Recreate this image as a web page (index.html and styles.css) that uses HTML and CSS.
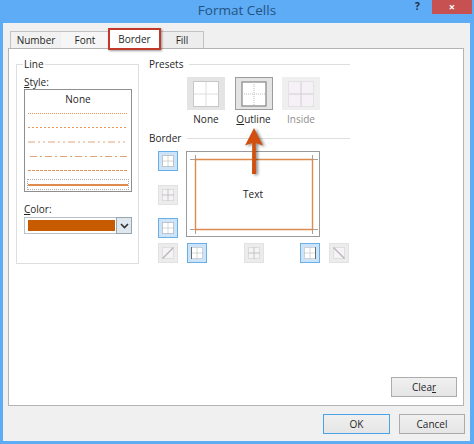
FILE: index.html
```html
<!DOCTYPE html>
<html lang="en">
<head>
    <meta charset="UTF-8">
    <title>Format Cells</title>
    <link rel="stylesheet" href="styles.css">
</head>
<body>

<svg class="defs" width="0" height="0">
    <symbol id="ico-cross" viewBox="0 0 20 20">
        <rect x="4.5" y="4.5" width="11" height="11" fill="#fff" stroke="#9a9a9a" stroke-dasharray="1 1"/>
        <path d="M10 4.5v11M4.5 10h11" stroke="#b0b0b0" stroke-dasharray="1 1" fill="none"/>
    </symbol>
    <symbol id="ico-left" viewBox="0 0 20 20">
        <rect x="4.5" y="4.5" width="11" height="11" fill="#fff" stroke="#b4b4b4" stroke-dasharray="1 1"/>
        <path d="M10 4.5v11M4.5 10h11" stroke="#b0b0b0" stroke-dasharray="1 1" fill="none"/>
        <path d="M4.5 4v12" stroke="#6d6d6d" fill="none"/>
    </symbol>
    <symbol id="ico-right" viewBox="0 0 20 20">
        <rect x="4.5" y="4.5" width="11" height="11" fill="#fff" stroke="#b4b4b4" stroke-dasharray="1 1"/>
        <path d="M10 4.5v11M4.5 10h11" stroke="#b0b0b0" stroke-dasharray="1 1" fill="none"/>
        <path d="M15.5 4v12" stroke="#6d6d6d" fill="none"/>
    </symbol>
    <symbol id="ico-mid" viewBox="0 0 20 20">
        <rect x="4.5" y="4.5" width="11" height="11" fill="#f6f3f6" stroke="#c8c8c8" stroke-dasharray="1 1"/>
        <path d="M10 4v12M4 10h12" stroke="#c4c4c4" fill="none"/>
    </symbol>
    <symbol id="ico-up" viewBox="0 0 20 20">
        <rect x="4.5" y="4.5" width="11" height="11" fill="#f6f3f6" stroke="#cfcfcf" stroke-dasharray="1 1"/>
        <path d="M4.5 15.5l11-11" stroke="#b8b8b8" stroke-width="1.4" fill="none"/>
    </symbol>
    <symbol id="ico-down" viewBox="0 0 20 20">
        <rect x="4.5" y="4.5" width="11" height="11" fill="#f6f3f6" stroke="#cfcfcf" stroke-dasharray="1 1"/>
        <path d="M4.5 4.5l11 11" stroke="#b8b8b8" stroke-width="1.4" fill="none"/>
    </symbol>
</svg>

<div class="titlebar">
    <span class="title">Format Cells</span>
    <span class="help">?</span>
    <span class="close">&times;</span>
</div>

<div class="client">
    <div class="tabs">
        <div class="tab tab-number">Number</div>
        <div class="tab tab-font">Font</div>
        <div class="tab tab-active">Border</div>
        <div class="tab tab-fill">Fill</div>
    </div>

    <div class="panel">
        <div class="columns">

            <!-- Line -->
            <fieldset class="line-group">
                <legend>Line</legend>
                <div class="field-label"><u>S</u>tyle:</div>
                <div class="style-box">
                    <div class="style-none">None</div>
                    <svg class="style-lines" width="106" height="66" viewBox="0 0 106 66">
                        <g fill="none">
                            <line x1="3" x2="103" y1="3.5" y2="3.5" stroke="#e8965a" stroke-dasharray="1 1"/>
                            <line x1="3" x2="103" y1="17.5" y2="17.5" stroke="#e8965a" stroke-dasharray="2 2"/>
                            <line x1="3" x2="103" y1="32" y2="32" stroke="#dfa47a" stroke-width="1.2" stroke-dasharray="7 3 2 3 2 3"/>
                            <line x1="5" x2="103" y1="46.5" y2="46.5" stroke="#dfa47a" stroke-width="1.2" stroke-dasharray="7 3 2 3"/>
                            <line x1="3" x2="103" y1="60.5" y2="60.5" stroke="#dc9460" stroke-dasharray="3 1"/>
                        </g>
                    </svg>
                    <div class="style-selected"><div class="style-selected-line"></div></div>
                </div>
                <div class="field-label color-label"><u>C</u>olor:</div>
                <div class="combo">
                    <div class="combo-value"><div class="swatch"></div></div>
                    <div class="combo-arrow">
                        <svg width="9" height="6" viewBox="0 0 9 6"><path d="M1 1l3.5 3.5L8 1" fill="none" stroke="#333" stroke-width="1.6"/></svg>
                    </div>
                </div>
            </fieldset>

            <div class="right-col">
                <!-- Presets -->
                <div class="group-head"><span>Presets</span><div class="group-rule"></div></div>
                <div class="presets">
                    <div class="preset">
                        <div class="preset-tile">
                            <svg width="26" height="26" viewBox="0 0 26 26">
                                <rect x=".5" y=".5" width="25" height="25" fill="#fff" stroke="#9c9c9c" stroke-dasharray="1 1"/>
                                <path d="M13 1v24M1 13h24" stroke="#dedede" fill="none"/>
                            </svg>
                        </div>
                        <div class="preset-label">None</div>
                    </div>
                    <div class="preset">
                        <div class="preset-tile preset-on">
                            <svg width="26" height="26" viewBox="0 0 26 26">
                                <rect x="1" y="1" width="24" height="24" fill="#fff" stroke="#8c8c8c" stroke-width="1.3"/>
                                <path d="M13 1v24M1 13h24" stroke="#bdbdbd" stroke-dasharray="1 1" fill="none"/>
                            </svg>
                        </div>
                        <div class="preset-label"><u>O</u>utline</div>
                    </div>
                    <div class="preset">
                        <div class="preset-tile preset-off">
                            <svg width="26" height="26" viewBox="0 0 26 26">
                                <rect x=".5" y=".5" width="25" height="25" fill="#f6f1f6" stroke="#d4d4d4" stroke-dasharray="1 1"/>
                                <path d="M13 1v24M1 13h24" stroke="#cfcfcf" fill="none"/>
                            </svg>
                        </div>
                        <div class="preset-label preset-label-off">Inside</div>
                    </div>
                </div>

                <!-- Border -->
                <div class="group-head border-head"><span>Border</span><div class="group-rule"></div></div>
                <div class="border-main">
                    <div class="side-icons">
                        <div class="ico ico-on"><svg width="20" height="20"><use href="#ico-cross"/></svg></div>
                        <div class="ico"><svg width="20" height="20"><use href="#ico-mid"/></svg></div>
                        <div class="ico ico-on"><svg width="20" height="20"><use href="#ico-cross"/></svg></div>
                    </div>
                    <div class="preview">
                        <svg class="preview-lines" width="132" height="84" viewBox="0 0 132 84">
                            <path d="M8.5 3v10M125.5 3v10M8.5 73v9M125.5 73v9M3 7.5h11M120 7.5h11M3 77.5h11M120 77.5h11" stroke="#a3a3a3" fill="none"/>
                            <path d="M8.5 7.5h117v70H8.5z" stroke="#dc8a4e" stroke-width="1.4" fill="none"/>
                        </svg>
                        <span class="preview-text">Text</span>
                    </div>
                </div>
                <div class="bottom-icons">
                    <div class="ico"><svg width="20" height="20"><use href="#ico-up"/></svg></div>
                    <div class="bottom-mid">
                        <div class="ico ico-on"><svg width="20" height="20"><use href="#ico-left"/></svg></div>
                        <div class="ico"><svg width="20" height="20"><use href="#ico-mid"/></svg></div>
                        <div class="ico ico-on"><svg width="20" height="20"><use href="#ico-right"/></svg></div>
                    </div>
                    <div class="ico"><svg width="20" height="20"><use href="#ico-down"/></svg></div>
                </div>
            </div>
        </div>

        <div class="panel-foot">
            <div class="btn">Clea<u>r</u></div>
        </div>

        <!-- Callout arrow -->
        <svg class="callout" width="24" height="52" viewBox="0 0 24 52">
            <path d="M12 1L3 18.5L10.2 16L10 47h4L13.8 16L21 18.5z" fill="#d2500f"/>
        </svg>
    </div>

    <div class="footer">
        <div class="btn btn-default">OK</div>
        <div class="btn">Cancel</div>
    </div>
</div>

</body>
</html>
```

FILE: styles.css
```css
* {
    box-sizing: border-box;
}

body {
    margin: 0;
    width: 474px;
    height: 444px;
    overflow: hidden;
    background-color: #5eabf6;
    font-family: "Open Sans", "Noto Sans", sans-serif;
    font-size: 10px;
    line-height: 14px;
    color: #262626;
}

.defs {
    position: absolute;
}

/* Title bar */
.titlebar {
    height: 23px;
    display: flex;
    justify-content: center;
    position: relative;
}

.title {
    font-size: 13.5px;
    line-height: 18px;
    margin-top: 1px;
    color: #22557f;
}

.help {
    position: absolute;
    left: 415px;
    top: 0;
    font-size: 10px;
    line-height: 12px;
    font-weight: 700;
    color: #1d2a38;
}

.close {
    position: absolute;
    left: 432px;
    top: 0;
    width: 40px;
    height: 14px;
    background-color: #c75050;
    color: #fff;
    font-size: 11px;
    line-height: 14px;
    font-weight: 700;
    text-align: center;
}

/* Client area */
.client {
    margin-left: 3px;
    width: 467px;
    height: 418px;
    background-color: #f0f0f0;
    display: flex;
    flex-direction: column;
}

.tabs {
    height: 25px;
    padding-left: 7px;
    display: flex;
    align-items: flex-end;
}

.tab {
    height: 17px;
    line-height: 16px;
    text-align: center;
    border: 1px solid #c2c2c2;
    border-bottom: none;
    margin-right: -1px;
    background-color: #f1f1f1;
}

.tab-number {
    width: 52px;
}

.tab-font {
    width: 48px;
    background-color: #f6f6f6;
    border-left: none;
    border-right: none;
}

.tab-fill {
    width: 44px;
    background-color: #ededed;
}

.tab-active {
    width: 53px;
    height: 22px;
    line-height: 19px;
    margin-bottom: -2px;
    background-color: #fff;
    border: 2px solid #c0392b;
    box-shadow: 1px 1px 2px rgba(0, 0, 0, 0.4);
    position: relative;
    z-index: 1;
}

.panel {
    margin-left: 5px;
    width: 456px;
    height: 358px;
    background-color: #fff;
    border: 1px solid #b4b4b4;
    display: flex;
    flex-direction: column;
    position: relative;
}

.columns {
    display: flex;
    padding: 8px 0 0 7px;
    gap: 10px;
}

/* Line group */
.line-group {
    margin: 0;
    padding: 0 6px 0 7px;
    width: 123px;
    height: 207px;
    border: 1px solid #dedede;
}

.line-group legend {
    padding: 0 1px;
    margin-left: -1px;
}

.field-label {
    margin-top: 4px;
}

.color-label {
    margin-top: 10px;
}

.style-box {
    width: 108px;
    height: 103px;
    border: 1px solid #8f8f8f;
    padding-top: 2px;
}

.style-none {
    text-align: center;
}

.style-lines {
    display: block;
    margin-top: 4px;
}

.style-selected {
    margin: 3px 2px 0;
    height: 11px;
    border: 1px dotted #aaa;
    padding-top: 4px;
}

.style-selected-line {
    height: 2px;
    background-color: #e08c4e;
}

.combo {
    margin-top: 1px;
    width: 108px;
    height: 17px;
    border: 1px solid #b9c2cc;
    display: flex;
}

.combo-value {
    flex: 1;
    padding: 2px 2px 2px 3px;
}

.swatch {
    height: 100%;
    background-color: #c85a00;
}

.combo-arrow {
    width: 16px;
    background-color: #dfe7ef;
    border: 1px solid #9aa4ae;
    margin: -1px;
    display: flex;
    align-items: center;
    justify-content: center;
}

/* Right column */
.right-col {
    width: 201px;
}

.group-head {
    display: flex;
    align-items: center;
    gap: 6px;
}

.group-rule {
    flex: 1;
    height: 1px;
    background-color: #dedede;
}

.presets {
    margin-top: 6px;
    padding-left: 38px;
    display: flex;
    gap: 9.5px;
}

.preset {
    width: 38px;
    display: flex;
    flex-direction: column;
    align-items: center;
}

.preset-tile {
    width: 38px;
    height: 33px;
    background-color: #e4e4e4;
    display: flex;
    align-items: center;
    justify-content: center;
}

.preset-tile svg,
.ico svg {
    display: block;
}

.preset-on {
    border: 1px solid #9c9c9c;
}

.preset-off {
    background-color: #efefef;
}

.preset-label {
    margin-top: 2px;
    white-space: nowrap;
}

.preset-label-off {
    color: #8d8d8d;
}

.border-head {
    margin-top: 5px;
}

.border-main {
    margin-top: 6px;
    padding-left: 9px;
    display: flex;
    gap: 8px;
}

.side-icons {
    display: flex;
    flex-direction: column;
    gap: 13.5px;
}

.ico {
    width: 20px;
    height: 20px;
    background-color: #ececec;
    border: 1px solid #e2e2e2;
    display: flex;
    align-items: center;
    justify-content: center;
    flex: none;
}

.ico svg {
    flex: none;
}

.ico-on {
    background-color: #cde4f8;
    border-color: #68aee8;
}

.preview {
    width: 134px;
    height: 86px;
    border: 1px solid #9a9a9a;
    position: relative;
    display: flex;
    align-items: center;
    justify-content: center;
}

.preview-lines {
    position: absolute;
    left: 0;
    top: 0;
}

.preview-text {
    position: relative;
    color: #222;
}

.bottom-icons {
    margin-top: 5px;
    padding-left: 9px;
    display: flex;
    gap: 9px;
}

.bottom-mid {
    width: 133px;
    display: flex;
    justify-content: space-between;
}

/* Buttons */
.panel-foot {
    margin-top: auto;
    padding: 0 6px 8px 0;
    display: flex;
    justify-content: flex-end;
}

.btn {
    width: 66px;
    height: 20px;
    line-height: 18px;
    text-align: center;
    border: 1px solid #acacac;
    background: linear-gradient(#f0f0f0, #e5e5e5);
}

.btn-default {
    width: 67px;
    border-color: #4aa3e6;
}

.footer {
    padding: 8px 5px 0 0;
    display: flex;
    justify-content: flex-end;
    gap: 9px;
}

/* Callout arrow over the dialog */
.callout {
    position: absolute;
    left: 233px;
    top: 78px;
    filter: drop-shadow(2px 1px 1.5px rgba(0, 0, 0, 0.45));
}
```
